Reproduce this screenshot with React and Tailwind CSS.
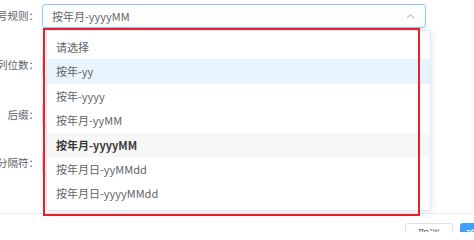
import React from "react";

const options = [
  { label: "请选择" },
  { label: "按年-yy", hover: true },
  { label: "按年-yyyy" },
  { label: "按年月-yyMM" },
  { label: "按年月-yyyyMM", selected: true },
  { label: "按年月日-yyMMdd" },
  { label: "按年月日-yyyyMMdd" },
];

const FormRow = ({ label, className, children }) => (
  <div className={`flex items-center ${className}`}>
    <div className="flex w-[42px] shrink-0 justify-end whitespace-nowrap pr-[3px] text-[10.5px] text-[#606266]">
      {label}
    </div>
    <div className="w-[384px]">{children}</div>
  </div>
);

const App = () => {
  return (
    <div
      className="relative h-[232px] w-[474px] overflow-hidden bg-white"
      style={{ fontFamily: '"Noto Sans CJK SC", "Noto Sans", sans-serif' }}
    >
      <div className="flex flex-col pt-[4px]">
        <FormRow label="流水号规则：" className="h-[24px]">
          <div className="flex h-[24px] items-center justify-between rounded-[3px] border border-[#8cc5ff] pl-[9px] pr-[9px] text-[11px] text-[#606266]">
            <span>按年月-yyyyMM</span>
            <svg width="9" height="6" viewBox="0 0 9 6" fill="none" className="mr-[1px]">
              <path d="M1 5l3.5-3.5L8 5" stroke="#c0c4cc" strokeWidth="1.1" />
            </svg>
          </div>
        </FormRow>
        <FormRow label="序列位数：" className="mt-[25px] h-[24px]">
          <div className="h-[24px] rounded-[3px] border border-[#dcdfe6]" />
        </FormRow>
        <FormRow label="后缀：" className="mt-[26px] h-[24px]">
          <div className="h-[24px] rounded-[3px] border border-[#dcdfe6]" />
        </FormRow>
        <FormRow label="分隔符：" className="mt-[24px] h-[24px]">
          <div className="h-[24px] rounded-[3px] border border-[#dcdfe6]" />
        </FormRow>
      </div>

      <div className="mt-[38px] flex justify-end gap-[7px] border-t border-[#ebeef5] pt-[9px]">
        <button className="h-[22px] w-[48px] rounded-[3px] border border-[#dcdfe6] bg-white text-[11px] leading-[20px] text-[#606266]">
          取消
        </button>
        <button className="mr-[-20px] h-[22px] w-[34px] rounded-[3px] bg-[#409eff] text-[11px] text-white">
          确定
        </button>
      </div>

      <div className="absolute left-[46px] top-[30px] w-[385px] rounded-[3px] border border-[#e4e7ed] bg-white py-[4px] shadow-[0_2px_8px_rgba(0,0,0,0.1)]">
        {options.map((o) => (
          <div
            key={o.label}
            className={`flex h-[24.4px] items-center pl-[9px] text-[11px] ${
              o.hover ? "bg-[#e8f4fd]" : o.selected ? "bg-[#f7f7f7]" : ""
            } ${o.selected ? "font-semibold text-[#3a3a3a]" : "text-[#606266]"}`}
          >
            {o.label}
          </div>
        ))}
      </div>

      <div className="absolute left-[43px] top-[28px] h-[188px] w-[377px] border-2 border-[#e8202a]" />
    </div>
  );
};

export default App;
